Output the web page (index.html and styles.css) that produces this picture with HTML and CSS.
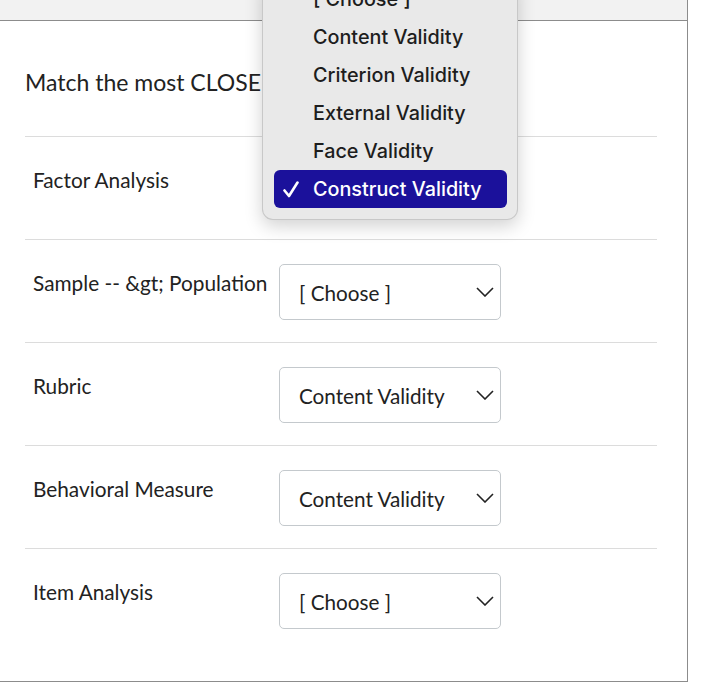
FILE: index.html
```html
<!DOCTYPE html>
<html lang="en">
<head>
<meta charset="utf-8">
<title>Matching question</title>
<link rel="stylesheet" href="styles.css">
</head>
<body>
<div class="panel">
  <div class="panel-header"></div>
  <div class="panel-body">
    <p class="question">Match the most CLOSELY related term.</p>
    <div class="rows">
      <div class="row">
        <div class="label">Factor Analysis</div>
        <div class="select"><span>Construct Validity</span><svg class="chev" viewBox="0 0 18 10" width="18" height="10"><path d="M1 1 L9 9 L17 1" fill="none" stroke="#222" stroke-width="1.6"/></svg></div>
      </div>
      <div class="row">
        <div class="label">Sample -- &amp;gt; Population</div>
        <div class="select"><span>[ Choose ]</span><svg class="chev" viewBox="0 0 18 10" width="18" height="10"><path d="M1 1 L9 9 L17 1" fill="none" stroke="#222" stroke-width="1.6"/></svg></div>
      </div>
      <div class="row">
        <div class="label">Rubric</div>
        <div class="select"><span>Content Validity</span><svg class="chev" viewBox="0 0 18 10" width="18" height="10"><path d="M1 1 L9 9 L17 1" fill="none" stroke="#222" stroke-width="1.6"/></svg></div>
      </div>
      <div class="row">
        <div class="label">Behavioral Measure</div>
        <div class="select"><span>Content Validity</span><svg class="chev" viewBox="0 0 18 10" width="18" height="10"><path d="M1 1 L9 9 L17 1" fill="none" stroke="#222" stroke-width="1.6"/></svg></div>
      </div>
      <div class="row">
        <div class="label">Item Analysis</div>
        <div class="select"><span>[ Choose ]</span><svg class="chev" viewBox="0 0 18 10" width="18" height="10"><path d="M1 1 L9 9 L17 1" fill="none" stroke="#222" stroke-width="1.6"/></svg></div>
      </div>
    </div>
  </div>
</div>

<ul class="menu">
  <li class="item">[ Choose ]</li>
  <li class="item">Content Validity</li>
  <li class="item">Criterion Validity</li>
  <li class="item">External Validity</li>
  <li class="item">Face Validity</li>
  <li class="item selected"><svg class="check" viewBox="0 0 16 17" width="16" height="17"><path d="M1.5 9.5 L6 15 L14.5 1.5" fill="none" stroke="#fff" stroke-width="2.6" stroke-linecap="round" stroke-linejoin="round"/></svg>Construct Validity</li>
</ul>
</body>
</html>
```

FILE: styles.css
```css
* { box-sizing: border-box; }

html, body {
  margin: 0;
  padding: 0;
  background: #ffffff;
}

body {
  font-family: Lato, "Liberation Sans", sans-serif;
  color: #222;
  position: relative;
  width: 724px;
  height: 692px;
  overflow: hidden;
}

.panel {
  width: 688px;
  border-right: 1px solid #8c8c8c;
  border-bottom: 1px solid #8c8c8c;
}

.panel-header {
  height: 21px;
  background: #f2f2f2;
  border-bottom: 1px solid #8c8c8c;
}

.panel-body {
  padding: 0 30px 30px 25px;
}

.question {
  margin: 0;
  padding-top: 46px;
  height: 115px;
  font-size: 23px;
  line-height: 30px;
  color: #222;
  white-space: nowrap;
}

.row {
  display: flex;
  align-items: flex-start;
  border-top: 1px solid #dcdcdc;
  padding: 24px 0 22px 8px;
  height: 103px;
}

.label {
  width: 246px;
  flex: none;
  font-size: 20.8px;
  line-height: 28px;
  padding-top: 5px;
  color: #222;
  white-space: nowrap;
}

.select {
  width: 222px;
  height: 56px;
  border: 1px solid #c4c9cd;
  border-radius: 5px;
  display: flex;
  align-items: center;
  justify-content: space-between;
  padding: 2px 6px 0 19px;
  font-size: 20.7px;
  color: #222;
  background: #fff;
}

.chev { display: block; margin-top: -2px; }

.menu {
  position: absolute;
  left: 262px;
  top: -26px;
  width: 256px;
  margin: 0;
  list-style: none;
  padding: 5px 10px 11px 11px;
  background: #e9e9e9;
  border: 1px solid rgba(0,0,0,0.14);
  border-radius: 11px;
  box-shadow: 0 6px 18px rgba(0,0,0,0.18);
  font-family: Inter, "Noto Sans", sans-serif;
  font-weight: 500;
  font-size: 19.8px;
  color: #1d1d1d;
}

.item {
  height: 38px;
  line-height: 38px;
  padding-left: 39px;
  border-radius: 6px;
  position: relative;
  white-space: nowrap;
}

.item.selected {
  background: #1b119b;
  color: #fff;
}

.check {
  position: absolute;
  left: 9px;
  top: 11px;
}
```
